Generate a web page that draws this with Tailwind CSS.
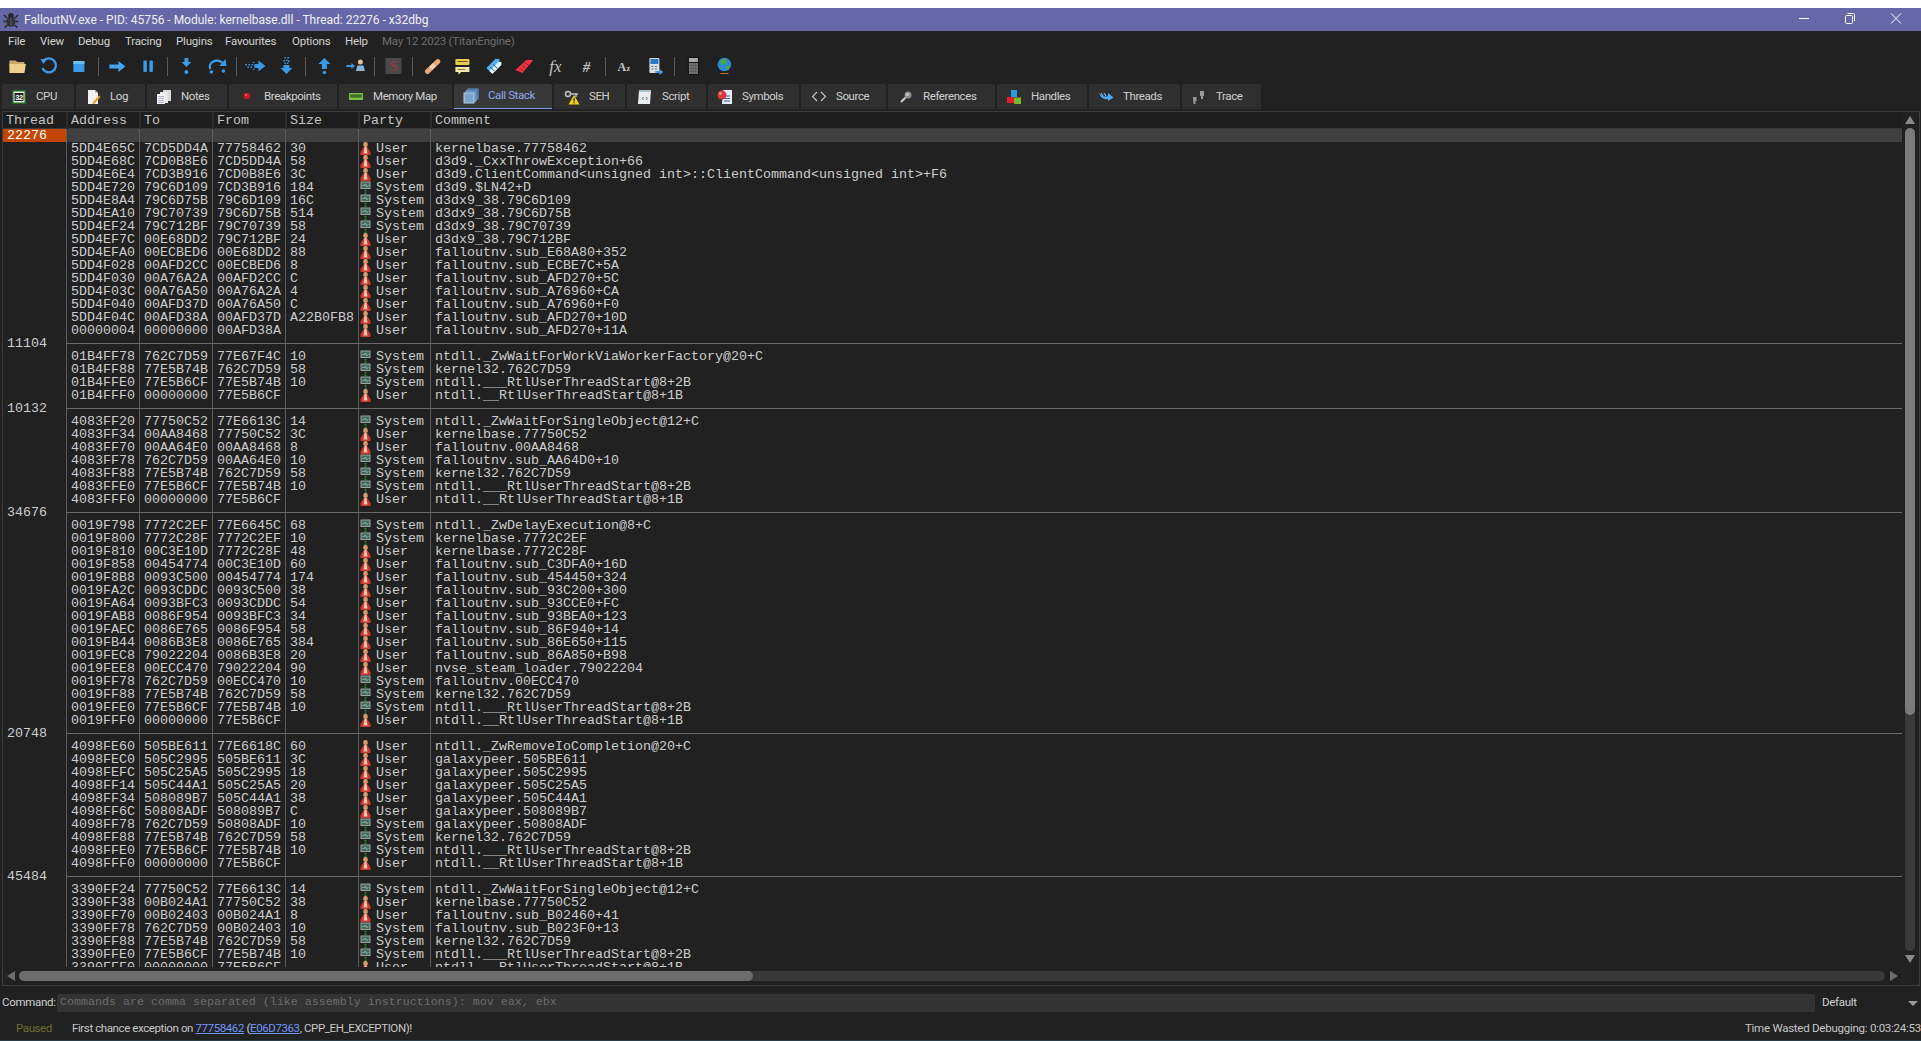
<!DOCTYPE html>
<html lang="en">
<head>
<meta charset="utf-8">
<title>x32dbg</title>
<script src="https://cdn.jsdelivr.net/npm/@tailwindcss/browser@4"></script>
</head>
<body class="bg-white">
<svg class="hidden" width="0" height="0">
  <symbol id="u" viewBox="0 0 12 13">
    <rect x="3.300" y="0" width="4.400" height="5" rx="1.800" fill="#d89a68"/>
    <path d="M3.800 5 H7.200 L10.500 10 V13 H0.500 V10 Z" fill="#c8382e"/>
    <path d="M4.500 5 H6.500 L7.500 11.500 H3.500 Z" fill="#f2c4ac"/>
  </symbol>
  <symbol id="s" viewBox="0 0 12 13">
    <rect x="0.500" y="0.500" width="10" height="7.500" fill="#9aa4a4"/>
    <rect x="1.500" y="1.500" width="8" height="5.500" fill="#46685c"/>
    <path d="M2.500 4.500 L4.500 4.500 L5.500 3 L6.500 5.500 L8.500 4.500" stroke="#a8d0c0" stroke-width="0.700" fill="none"/>
    <rect x="4.500" y="9" width="2" height="1.500" fill="#1f8a3a"/>
    <rect x="4.500" y="11.500" width="2" height="1.500" fill="#1f8a3a"/>
  </symbol>
</svg>

<div class="w-[1921px] h-[1041px] overflow-hidden flex flex-col font-['Roboto','Liberation_Sans',sans-serif]">
  <div class="h-2 shrink-0 bg-white"></div>

  <!-- title bar -->
  <div class="h-[23px] shrink-0 bg-[#6567a8] flex items-center pl-[3px] text-[#f0f0f0] text-[12px]">
    <svg class="w-[16px] h-[16px] mr-[5px]" viewBox="0 0 16 16"><ellipse cx="8" cy="9.500" rx="4.500" ry="5.500" fill="#333"/><circle cx="8" cy="3.800" r="2.800" fill="#262626"/><path d="M4 6 L1 3 M12 6 L15 3 M3.500 9.500 L0.500 9.500 M12.500 9.500 L15.500 9.500 M4.500 13 L1.500 15.500 M11.500 13 L14.500 15.500" stroke="#262626" stroke-width="1.400"/><path d="M8 5 V15" stroke="#6567a8" stroke-width="0.700"/></svg>
    <span>FalloutNV.exe - PID: 45756 - Module: kernelbase.dll - Thread: 22276 - x32dbg</span>
    <div class="ml-auto flex items-center h-full">
      <svg class="w-[46px] h-[23px]" viewBox="0 0 46 23"><path d="M18 10.500 H28" stroke="#fff" stroke-width="1"/></svg>
      <svg class="w-[46px] h-[23px]" viewBox="0 0 46 23"><rect x="18.500" y="7.500" width="7" height="8" rx="1" fill="none" stroke="#fff"/><path d="M20.500 5.500 H26.500 a1 1 0 0 1 1 1 V13" fill="none" stroke="#fff"/></svg>
      <svg class="w-[46px] h-[23px] mr-[2px]" viewBox="0 0 46 23"><path d="M18 5.500 L28 15.500 M28 5.500 L18 15.500" stroke="#fff" stroke-width="1"/></svg>
    </div>
  </div>

  <div class="flex-1 bg-[#212121] flex flex-col border-b border-[#2c3c46]">
    <!-- menu -->
    <div class="h-[22px] shrink-0 flex items-center text-[11.500px] tracking-[-0.200px] text-[#d2d2d2]">
      <span class="w-[40px] pl-[8px]">File</span>
      <span class="w-[38px]">View</span>
      <span class="w-[47px]">Debug</span>
      <span class="w-[51px]">Tracing</span>
      <span class="w-[49px]">Plugins</span>
      <span class="w-[67px]">Favourites</span>
      <span class="w-[53px]">Options</span>
      <span class="w-[37px]">Help</span>
      <span class="text-[#6e6e6e]">May 12 2023 (TitanEngine)</span>
    </div>

    <!-- toolbar -->
    <div class="h-[29px] shrink-0 flex items-center pl-[2px] pb-[3px] [&>svg]:w-[30.800px] [&>svg]:h-[20px] [&>svg]:shrink-0 [&>i]:w-[7.500px] [&>i]:h-[20px] [&>i]:shrink-0 [&>i]:bg-[linear-gradient(#5a5a5a,#5a5a5a)] [&>i]:bg-no-repeat [&>i]:bg-center [&>i]:bg-[length:1px_19px]">
      <svg viewBox="0 0 30 20"><path d="M7 6 L7 4.500 L13 4.500 L15 6 L22 6 L22 9 L7 9 Z" fill="#c8a868"/><path d="M7 8 L23.500 8 L22 17 L7 17 Z" fill="#ecd08c"/></svg>
      <svg viewBox="0 0 30 20"><path d="M10 5 A7 7 0 1 1 9 12" fill="none" stroke="#3a9ae8" stroke-width="2.400"/><path d="M7 3 L14 3 L10 8 Z" fill="#3a9ae8"/></svg>
      <svg viewBox="0 0 30 20"><rect x="9" y="5" width="11" height="11" fill="#3a9ae8"/><rect x="9" y="5" width="11" height="3" fill="#6cbcf4"/></svg>
      <i></i>
      <svg viewBox="0 0 30 20"><path d="M7 8.500 H16 V5 L23 10.500 L16 16 V12.500 H7 Z" fill="#44a4f0"/></svg>
      <svg viewBox="0 0 30 20"><rect x="10" y="4.500" width="3.500" height="11.500" rx="1" fill="#3a9ae8"/><rect x="16" y="4.500" width="3.500" height="11.500" rx="1" fill="#3a9ae8"/></svg>
      <i></i>
      <svg viewBox="0 0 30 20"><path d="M13 2 H17 V6 H20 L15 11 L10 6 H13 Z" fill="#3a9ae8"/><circle cx="15" cy="16" r="2" fill="#3a9ae8"/></svg>
      <svg viewBox="0 0 30 20"><path d="M8 13 A7 6 0 0 1 20 7" fill="none" stroke="#3a9ae8" stroke-width="2.400"/><path d="M17 10 L24 10 L23 3 Z" fill="#3a9ae8"/><circle cx="9" cy="16" r="1.800" fill="#3a9ae8"/><circle cx="21" cy="15" r="1.800" fill="#3a9ae8"/></svg>
      <i></i>
      <svg viewBox="0 0 30 20"><path d="M14 8 H18 V4.500 L25 10 L18 15.500 V12 H14 Z" fill="#3a9ae8"/><path d="M5 8 h1.500 v1.500 H5 Z M8 8 h1.500 v1.500 H8 Z M11 8 h1.500 v1.500 H11 Z M7 10.500 h1.500 V12 H7 Z M10 10.500 h1.500 V12 H10 Z M12.500 6 H14 V7 H12.500 Z M12.500 13 H14 V14 H12.500 Z" fill="#3a9ae8"/></svg>
      <svg viewBox="0 0 30 20"><path d="M12 9 H18 V12 H21 L15 18 L9 12 H12 Z" fill="#3a9ae8"/><path d="M13 1 h1.500 v1.500 H13 Z M16 1 h1.500 v1.500 H16 Z M14.500 3.500 h1.500 V5 h-1.500 Z M12 4 h1.500 v1.500 H12 Z M16.500 4.500 H18 V6 h-1.500 Z M13 6.500 h1.500 V8 H13 Z M15.500 6.500 H17 V8 h-1.500 Z" fill="#3a9ae8"/></svg>
      <i></i>
      <svg viewBox="0 0 30 20"><path d="M15 2 L21 8 H17.500 V13 H12.500 V8 H9 Z" fill="#3a9ae8"/><circle cx="15" cy="16.500" r="1.800" fill="#3a9ae8"/></svg>
      <svg viewBox="0 0 30 20"><path d="M6 9 H11 V7 L14.500 10 L11 13 V11 H6 Z" fill="#3a9ae8"/><circle cx="20" cy="6" r="2.500" fill="#e8c090"/><path d="M15.500 15 L17 9.500 H23 L24.500 15 Z" fill="#8ab4dc"/></svg>
      <i></i>
      <svg viewBox="0 0 30 20"><rect x="7" y="2" width="16" height="16" fill="#4a4a4a"/><text x="15" y="15" text-anchor="middle" font-family="'Liberation Serif',serif" font-weight="700" font-size="15" fill="#8e3a46">S</text></svg>
      <i></i>
      <svg viewBox="0 0 30 20"><path d="M8 14 L19 3.500 A2.500 2.500 0 0 1 22.500 7 L11.500 17.500 A2.500 2.500 0 0 1 8 14 Z" fill="#e8a878"/><rect x="-2.500" y="-2" width="5" height="4" transform="translate(15.200 10.500) rotate(-44)" fill="#f6d4b4"/></svg>
      <svg viewBox="0 0 30 20"><rect x="8" y="3" width="14" height="6" rx="1" fill="#e8cc50"/><rect x="10" y="5" width="10" height="1" fill="#6a5a20"/><rect x="8" y="11" width="14" height="5" fill="#f4e8b0"/><path d="M11 16 L11 18.500 L14 16 Z" fill="#f4e8b0"/><rect x="10" y="13" width="8" height="1" fill="#8a7a3a"/></svg>
      <svg viewBox="0 0 30 20"><path d="M8 12 L17 3 H21 V7 L12 16 Z" fill="#58b0ee"/><path d="M11 15 L20 6 H23 V9 L14 18 Z" fill="#e6f2fc"/><path d="M12 11 L16 15 M15 8.500 L19 12.500" stroke="#1a5a90" stroke-width="1"/></svg>
      <svg viewBox="0 0 30 20"><path d="M6 14 L17 4 H24 L13 17 Z" fill="#ee3440"/><path d="M10 12 L14 15 M13 9.500 L17 12.500 M16 7 L20 10" stroke="#a51a24" stroke-width="1"/></svg>
      <svg viewBox="0 0 30 20"><text x="15" y="15.500" text-anchor="middle" font-family="'Liberation Serif',serif" font-style="italic" font-size="17" fill="#c0c0c0">fx</text></svg>
      <svg viewBox="0 0 30 20"><text x="15" y="15.500" text-anchor="middle" font-family="'Liberation Serif',serif" font-style="italic" font-weight="700" font-size="15" fill="#c0c0c0">#</text></svg>
      <i></i>
      <svg viewBox="0 0 30 20"><text x="8" y="15" font-family="'Liberation Serif',serif" font-weight="700" font-size="12" fill="#c8c8c8">A</text><text x="17" y="15" font-family="'Liberation Serif',serif" font-weight="700" font-size="8" fill="#c8c8c8">z</text></svg>
      <svg viewBox="0 0 30 20"><rect x="9" y="2" width="10" height="15" rx="1" fill="#d8dee4"/><rect x="10" y="3" width="8" height="5" fill="#2878c8"/><path d="M11 10 h2 v1 h-2 Z M14.500 10 h2 v1 h-2 Z M11 12.500 h2 v1 h-2 Z M14.500 12.500 h2 v1 h-2 Z" fill="#666"/><path d="M15 15 H19 V13 L23 16 L19 19 V17 H15 Z" fill="#3a9ae8"/></svg>
      <i></i>
      <svg viewBox="0 0 30 20"><rect x="9.500" y="1" width="11" height="18" fill="#111"/><rect x="10.500" y="2" width="9" height="4" fill="#a8a8a8"/><rect x="10.500" y="7" width="9" height="11" fill="#7a7a7a"/><path d="M12.800 7 V18 M15 7 V18 M17.200 7 V18 M10.500 9.500 H19.500 M10.500 12.500 H19.500 M10.500 15.500 H19.500" stroke="#555" stroke-width="0.700"/></svg>
      <svg viewBox="0 0 30 20"><circle cx="15" cy="8.500" r="6.800" fill="#2a88d0"/><path d="M11 4 Q15 2 17 4 L16 8 L12 9 Z M16 11 L20 9 L20 12 L17 14 Z" fill="#4ea83a"/><path d="M11 17 H19 V18 H11 Z" fill="#d86a20"/><path d="M9 16 H21" stroke="#222" stroke-width="1"/></svg>
    </div>

    <!-- tabs -->
    <div class="mt-[2px] h-[25px] shrink-0 flex gap-[2px] pl-[2px] text-[11.500px] tracking-[-0.400px] text-[#cfcfcf] [&>div]:bg-[#2f2f2f] [&>div]:rounded-t-[2px] [&>div]:flex [&>div]:items-center [&>div]:pl-[9px] [&>div]:gap-[9px] [&_svg]:w-[16px] [&_svg]:h-[16px] [&_svg]:shrink-0">
      <div class="w-[72px]"><svg viewBox="0 0 16 16"><rect x="1" y="1" width="14" height="14" fill="#1c6a1c"/><rect x="2.500" y="2.500" width="11" height="11" fill="#eaeaea"/><rect x="3.500" y="4" width="9" height="8" fill="#222"/><text x="8" y="11" text-anchor="middle" font-family="'Liberation Sans',sans-serif" font-weight="700" font-size="7.500" fill="#fff">32</text></svg><span>CPU</span></div>
      <div class="w-[69px]"><svg viewBox="0 0 16 16"><path d="M3 1 H10 L13 4 V15 H3 Z" fill="#f2f2f2"/><path d="M10 1 L13 4 H10 Z" fill="#b8b8b8"/><path d="M8 13 L14 6.500 L15.500 8 L9.500 14.500 L7.500 15 Z" fill="#e0a020"/></svg><span>Log</span></div>
      <div class="w-[80px]"><svg viewBox="0 0 16 16"><rect x="7" y="1" width="8" height="11" fill="#d8d8d8"/><rect x="4" y="3" width="8" height="11" fill="#e8e8e8"/><rect x="1" y="5" width="8" height="10" fill="#f8f8f8"/><path d="M2 7.500 H8 M2 9.500 H8 M2 11.500 H8 M2 13.500 H8" stroke="#a0a0c0" stroke-width="0.800"/></svg><span>Notes</span></div>
      <div class="w-[108px] !gap-[10px]"><svg viewBox="0 0 16 16"><circle cx="9" cy="7" r="3.300" fill="#d01820"/><circle cx="8" cy="6" r="1" fill="#f07070"/></svg><span>Breakpoints</span></div>
      <div class="w-[113px]"><svg viewBox="0 0 16 16"><rect x="1" y="4" width="14" height="7" fill="#78c040"/><rect x="2.500" y="5.500" width="11" height="3" fill="#1f3a14"/><path d="M4 5.500 V8.500 M6 5.500 V8.500 M8 5.500 V8.500 M10 5.500 V8.500 M12 5.500 V8.500" stroke="#78c040" stroke-width="0.800"/></svg><span>Memory Map</span></div>
      <div class="w-[98px] !bg-[#383838] border-b border-[#8098ea] text-[#8ea8ee]"><svg viewBox="0 0 16 16"><rect x="5" y="1" width="10" height="10" fill="#2f5f94" stroke="#6c9ed0"/><rect x="3" y="3" width="10" height="10" fill="#4a7cae" stroke="#88b4dc"/><rect x="1" y="5" width="10" height="10" fill="#7ca4c8" stroke="#b4d0ea"/></svg><span>Call Stack</span></div>
      <div class="w-[71px] !pl-[10px]"><svg viewBox="0 0 16 16"><circle cx="4" cy="5" r="2.500" fill="none" stroke="#c0c0c0" stroke-width="1.500"/><path d="M6 5 H14 M12 5 V8" stroke="#c0c0c0" stroke-width="1.500"/><path d="M10 6 L15.500 15.500 H4.500 Z" fill="#f0d020"/><rect x="9.500" y="9" width="1.200" height="3.500" fill="#222"/><rect x="9.500" y="13.200" width="1.200" height="1.200" fill="#222"/></svg><span>SEH</span></div>
      <div class="w-[79px] !pl-[10px]"><svg viewBox="0 0 16 16"><path d="M2 1 H14 L13 15 H1 Z" fill="#e8eef0"/><path d="M2 1 H14 L14 3 H2 Z" fill="#a8c0c8"/><text x="7.500" y="12" text-anchor="middle" font-family="'Liberation Mono',monospace" font-size="7" fill="#444">‹›</text></svg><span>Script</span></div>
      <div class="w-[91px]"><svg viewBox="0 0 16 16"><path d="M6 1 H15 V15 H5 Z" fill="#e4ecf8"/><path d="M7 7 H13 M7 9.500 H13 M7 12 H13" stroke="#3a5aa8" stroke-width="1"/><circle cx="5" cy="6" r="4.500" fill="#d83a3a"/><circle cx="3.500" cy="4.500" r="1.300" fill="#f4a0a0"/></svg><span>Symbols</span></div>
      <div class="w-[85px] !pl-[10px]"><svg viewBox="0 0 16 16"><path d="M6 3 L1.500 7.500 L6 12 M10 3 L14.500 7.500 L10 12" fill="none" stroke="#c8c8c8" stroke-width="1.100"/></svg><span>Source</span></div>
      <div class="w-[107px] !pl-[10px]"><svg viewBox="0 0 16 16"><circle cx="10" cy="6" r="3.500" fill="#909090"/><circle cx="9.500" cy="5.500" r="1.500" fill="#c8c8c8"/><path d="M7.500 8.500 L3 13" stroke="#cfcfcf" stroke-width="2"/></svg><span>References</span></div>
      <div class="w-[90px]"><svg viewBox="0 0 16 16"><rect x="5" y="1" width="6" height="7" fill="#2a9ae0"/><rect x="1" y="8" width="7" height="6" fill="#e0202c"/><rect x="8" y="8.500" width="7" height="6.500" fill="#7ab82a"/></svg><span>Handles</span></div>
      <div class="w-[91px]"><svg viewBox="0 0 16 16"><path d="M1 4 Q5 9 10 7 V4 L15.500 8.500 L10 12 V10 Q3 11 1 4 Z" fill="#4eaaf0"/><path d="M6 4 L8 7 M3 4 L5 7" stroke="#9ad2fa" stroke-width="1"/></svg><span>Threads</span></div>
      <div class="w-[79px]"><svg viewBox="0 0 16 16"><path d="M2 8 h3.500 v4 h-1 v3 h-2 Z" fill="#9a9a9a"/><path d="M9 2 h4 v5 h-1 v3 h-2 v-3 h-1 Z" fill="#9a9a9a"/></svg><span>Trace</span></div>
    </div>

    <!-- panel -->
    <div class="mt-[2px] ml-[2px] mr-[1px] h-[875px] shrink-0 border border-[#3c3c3c] flex">
      <div class="w-[1899px] shrink-0 flex flex-col">
        <!-- header -->
        <div class="h-[17px] shrink-0 grid grid-cols-[63px_73px_73px_73px_73px_72px_1fr] bg-[#1e1e1e] border-b border-[#3a3a3a] font-['Liberation_Mono',monospace] text-[13.330px] leading-[17px] text-[#c4c4c4] [&>span]:border-l-2 [&>span]:border-[#2c2c2c] [&>span]:pl-[3px] [&>span:first-child]:border-l-0">
          <span>Thread</span><span>Address</span><span>To</span><span>From</span><span>Size</span><span>Party</span><span>Comment</span>
        </div>
        <!-- rows -->
        <div class="h-[838px] shrink-0 overflow-hidden font-['Liberation_Mono',monospace] text-[13.330px] text-[#cdcdcd] [&>div]:grid [&>div]:grid-cols-[63px_73px_73px_73px_73px_72px_1fr] [&>div]:h-[13px] [&>div]:leading-[13px] [&>div>span]:border-l [&>div>span]:border-[#5e5e5e] [&>div>span]:pl-[4px] [&>div>span]:h-[13px] [&>div>span]:whitespace-pre [&>div>span:first-child]:border-l-0 [&>div>span:nth-child(6)]:flex [&>div>span:nth-child(6)]:items-center [&>div>span:nth-child(6)]:pl-[1px] [&_svg]:w-[12px] [&_svg]:h-[13px] [&_svg]:mr-[4px] [&_svg]:shrink-0">
          <div class="bg-[#404040]"><span class="bg-[#c24500] text-white">22276</span><span></span><span></span><span></span><span></span><span></span><span></span></div>
          <div><span></span><span>5DD4E65C</span><span>7CD5DD4A</span><span>77758462</span><span>30</span><span><svg><use href="#u"/></svg>User</span><span>kernelbase.77758462</span></div>
          <div><span></span><span>5DD4E68C</span><span>7CD0B8E6</span><span>7CD5DD4A</span><span>58</span><span><svg><use href="#u"/></svg>User</span><span>d3d9._CxxThrowException+66</span></div>
          <div><span></span><span>5DD4E6E4</span><span>7CD3B916</span><span>7CD0B8E6</span><span>3C</span><span><svg><use href="#u"/></svg>User</span><span>d3d9.ClientCommand&lt;unsigned int&gt;::ClientCommand&lt;unsigned int&gt;+F6</span></div>
          <div><span></span><span>5DD4E720</span><span>79C6D109</span><span>7CD3B916</span><span>184</span><span><svg><use href="#s"/></svg>System</span><span>d3d9.$LN42+D</span></div>
          <div><span></span><span>5DD4E8A4</span><span>79C6D75B</span><span>79C6D109</span><span>16C</span><span><svg><use href="#s"/></svg>System</span><span>d3dx9_38.79C6D109</span></div>
          <div><span></span><span>5DD4EA10</span><span>79C70739</span><span>79C6D75B</span><span>514</span><span><svg><use href="#s"/></svg>System</span><span>d3dx9_38.79C6D75B</span></div>
          <div><span></span><span>5DD4EF24</span><span>79C712BF</span><span>79C70739</span><span>58</span><span><svg><use href="#s"/></svg>System</span><span>d3dx9_38.79C70739</span></div>
          <div><span></span><span>5DD4EF7C</span><span>00E68DD2</span><span>79C712BF</span><span>24</span><span><svg><use href="#u"/></svg>User</span><span>d3dx9_38.79C712BF</span></div>
          <div><span></span><span>5DD4EFA0</span><span>00ECBED6</span><span>00E68DD2</span><span>88</span><span><svg><use href="#u"/></svg>User</span><span>falloutnv.sub_E68A80+352</span></div>
          <div><span></span><span>5DD4F028</span><span>00AFD2CC</span><span>00ECBED6</span><span>8</span><span><svg><use href="#u"/></svg>User</span><span>falloutnv.sub_ECBE7C+5A</span></div>
          <div><span></span><span>5DD4F030</span><span>00A76A2A</span><span>00AFD2CC</span><span>C</span><span><svg><use href="#u"/></svg>User</span><span>falloutnv.sub_AFD270+5C</span></div>
          <div><span></span><span>5DD4F03C</span><span>00A76A50</span><span>00A76A2A</span><span>4</span><span><svg><use href="#u"/></svg>User</span><span>falloutnv.sub_A76960+CA</span></div>
          <div><span></span><span>5DD4F040</span><span>00AFD37D</span><span>00A76A50</span><span>C</span><span><svg><use href="#u"/></svg>User</span><span>falloutnv.sub_A76960+F0</span></div>
          <div><span></span><span>5DD4F04C</span><span>00AFD38A</span><span>00AFD37D</span><span>A22B0FB8</span><span><svg><use href="#u"/></svg>User</span><span>falloutnv.sub_AFD270+10D</span></div>
          <div><span></span><span>00000004</span><span>00000000</span><span>00AFD38A</span><span></span><span><svg><use href="#u"/></svg>User</span><span>falloutnv.sub_AFD270+11A</span></div>
          <div class="[&>span+span]:bg-[linear-gradient(#0000_6px,#6a6a6a_6px,#6a6a6a_7px,#0000_7px)]"><span>11104</span><span></span><span></span><span></span><span></span><span></span><span></span></div>
          <div><span></span><span>01B4FF78</span><span>762C7D59</span><span>77E67F4C</span><span>10</span><span><svg><use href="#s"/></svg>System</span><span>ntdll._ZwWaitForWorkViaWorkerFactory@20+C</span></div>
          <div><span></span><span>01B4FF88</span><span>77E5B74B</span><span>762C7D59</span><span>58</span><span><svg><use href="#s"/></svg>System</span><span>kernel32.762C7D59</span></div>
          <div><span></span><span>01B4FFE0</span><span>77E5B6CF</span><span>77E5B74B</span><span>10</span><span><svg><use href="#s"/></svg>System</span><span>ntdll.___RtlUserThreadStart@8+2B</span></div>
          <div><span></span><span>01B4FFF0</span><span>00000000</span><span>77E5B6CF</span><span></span><span><svg><use href="#u"/></svg>User</span><span>ntdll.__RtlUserThreadStart@8+1B</span></div>
          <div class="[&>span+span]:bg-[linear-gradient(#0000_6px,#6a6a6a_6px,#6a6a6a_7px,#0000_7px)]"><span>10132</span><span></span><span></span><span></span><span></span><span></span><span></span></div>
          <div><span></span><span>4083FF20</span><span>77750C52</span><span>77E6613C</span><span>14</span><span><svg><use href="#s"/></svg>System</span><span>ntdll._ZwWaitForSingleObject@12+C</span></div>
          <div><span></span><span>4083FF34</span><span>00AA8468</span><span>77750C52</span><span>3C</span><span><svg><use href="#u"/></svg>User</span><span>kernelbase.77750C52</span></div>
          <div><span></span><span>4083FF70</span><span>00AA64E0</span><span>00AA8468</span><span>8</span><span><svg><use href="#u"/></svg>User</span><span>falloutnv.00AA8468</span></div>
          <div><span></span><span>4083FF78</span><span>762C7D59</span><span>00AA64E0</span><span>10</span><span><svg><use href="#s"/></svg>System</span><span>falloutnv.sub_AA64D0+10</span></div>
          <div><span></span><span>4083FF88</span><span>77E5B74B</span><span>762C7D59</span><span>58</span><span><svg><use href="#s"/></svg>System</span><span>kernel32.762C7D59</span></div>
          <div><span></span><span>4083FFE0</span><span>77E5B6CF</span><span>77E5B74B</span><span>10</span><span><svg><use href="#s"/></svg>System</span><span>ntdll.___RtlUserThreadStart@8+2B</span></div>
          <div><span></span><span>4083FFF0</span><span>00000000</span><span>77E5B6CF</span><span></span><span><svg><use href="#u"/></svg>User</span><span>ntdll.__RtlUserThreadStart@8+1B</span></div>
          <div class="[&>span+span]:bg-[linear-gradient(#0000_6px,#6a6a6a_6px,#6a6a6a_7px,#0000_7px)]"><span>34676</span><span></span><span></span><span></span><span></span><span></span><span></span></div>
          <div><span></span><span>0019F798</span><span>7772C2EF</span><span>77E6645C</span><span>68</span><span><svg><use href="#s"/></svg>System</span><span>ntdll._ZwDelayExecution@8+C</span></div>
          <div><span></span><span>0019F800</span><span>7772C28F</span><span>7772C2EF</span><span>10</span><span><svg><use href="#s"/></svg>System</span><span>kernelbase.7772C2EF</span></div>
          <div><span></span><span>0019F810</span><span>00C3E10D</span><span>7772C28F</span><span>48</span><span><svg><use href="#u"/></svg>User</span><span>kernelbase.7772C28F</span></div>
          <div><span></span><span>0019F858</span><span>00454774</span><span>00C3E10D</span><span>60</span><span><svg><use href="#u"/></svg>User</span><span>falloutnv.sub_C3DFA0+16D</span></div>
          <div><span></span><span>0019F8B8</span><span>0093C500</span><span>00454774</span><span>174</span><span><svg><use href="#u"/></svg>User</span><span>falloutnv.sub_454450+324</span></div>
          <div><span></span><span>0019FA2C</span><span>0093CDDC</span><span>0093C500</span><span>38</span><span><svg><use href="#u"/></svg>User</span><span>falloutnv.sub_93C200+300</span></div>
          <div><span></span><span>0019FA64</span><span>0093BFC3</span><span>0093CDDC</span><span>54</span><span><svg><use href="#u"/></svg>User</span><span>falloutnv.sub_93CCE0+FC</span></div>
          <div><span></span><span>0019FAB8</span><span>0086F954</span><span>0093BFC3</span><span>34</span><span><svg><use href="#u"/></svg>User</span><span>falloutnv.sub_93BEA0+123</span></div>
          <div><span></span><span>0019FAEC</span><span>0086E765</span><span>0086F954</span><span>58</span><span><svg><use href="#u"/></svg>User</span><span>falloutnv.sub_86F940+14</span></div>
          <div><span></span><span>0019FB44</span><span>0086B3E8</span><span>0086E765</span><span>384</span><span><svg><use href="#u"/></svg>User</span><span>falloutnv.sub_86E650+115</span></div>
          <div><span></span><span>0019FEC8</span><span>79022204</span><span>0086B3E8</span><span>20</span><span><svg><use href="#u"/></svg>User</span><span>falloutnv.sub_86A850+B98</span></div>
          <div><span></span><span>0019FEE8</span><span>00ECC470</span><span>79022204</span><span>90</span><span><svg><use href="#u"/></svg>User</span><span>nvse_steam_loader.79022204</span></div>
          <div><span></span><span>0019FF78</span><span>762C7D59</span><span>00ECC470</span><span>10</span><span><svg><use href="#s"/></svg>System</span><span>falloutnv.00ECC470</span></div>
          <div><span></span><span>0019FF88</span><span>77E5B74B</span><span>762C7D59</span><span>58</span><span><svg><use href="#s"/></svg>System</span><span>kernel32.762C7D59</span></div>
          <div><span></span><span>0019FFE0</span><span>77E5B6CF</span><span>77E5B74B</span><span>10</span><span><svg><use href="#s"/></svg>System</span><span>ntdll.___RtlUserThreadStart@8+2B</span></div>
          <div><span></span><span>0019FFF0</span><span>00000000</span><span>77E5B6CF</span><span></span><span><svg><use href="#u"/></svg>User</span><span>ntdll.__RtlUserThreadStart@8+1B</span></div>
          <div class="[&>span+span]:bg-[linear-gradient(#0000_6px,#6a6a6a_6px,#6a6a6a_7px,#0000_7px)]"><span>20748</span><span></span><span></span><span></span><span></span><span></span><span></span></div>
          <div><span></span><span>4098FE60</span><span>505BE611</span><span>77E6618C</span><span>60</span><span><svg><use href="#u"/></svg>User</span><span>ntdll._ZwRemoveIoCompletion@20+C</span></div>
          <div><span></span><span>4098FEC0</span><span>505C2995</span><span>505BE611</span><span>3C</span><span><svg><use href="#u"/></svg>User</span><span>galaxypeer.505BE611</span></div>
          <div><span></span><span>4098FEFC</span><span>505C25A5</span><span>505C2995</span><span>18</span><span><svg><use href="#u"/></svg>User</span><span>galaxypeer.505C2995</span></div>
          <div><span></span><span>4098FF14</span><span>505C44A1</span><span>505C25A5</span><span>20</span><span><svg><use href="#u"/></svg>User</span><span>galaxypeer.505C25A5</span></div>
          <div><span></span><span>4098FF34</span><span>508089B7</span><span>505C44A1</span><span>38</span><span><svg><use href="#u"/></svg>User</span><span>galaxypeer.505C44A1</span></div>
          <div><span></span><span>4098FF6C</span><span>50808ADF</span><span>508089B7</span><span>C</span><span><svg><use href="#u"/></svg>User</span><span>galaxypeer.508089B7</span></div>
          <div><span></span><span>4098FF78</span><span>762C7D59</span><span>50808ADF</span><span>10</span><span><svg><use href="#s"/></svg>System</span><span>galaxypeer.50808ADF</span></div>
          <div><span></span><span>4098FF88</span><span>77E5B74B</span><span>762C7D59</span><span>58</span><span><svg><use href="#s"/></svg>System</span><span>kernel32.762C7D59</span></div>
          <div><span></span><span>4098FFE0</span><span>77E5B6CF</span><span>77E5B74B</span><span>10</span><span><svg><use href="#s"/></svg>System</span><span>ntdll.___RtlUserThreadStart@8+2B</span></div>
          <div><span></span><span>4098FFF0</span><span>00000000</span><span>77E5B6CF</span><span></span><span><svg><use href="#u"/></svg>User</span><span>ntdll.__RtlUserThreadStart@8+1B</span></div>
          <div class="[&>span+span]:bg-[linear-gradient(#0000_6px,#6a6a6a_6px,#6a6a6a_7px,#0000_7px)]"><span>45484</span><span></span><span></span><span></span><span></span><span></span><span></span></div>
          <div><span></span><span>3390FF24</span><span>77750C52</span><span>77E6613C</span><span>14</span><span><svg><use href="#s"/></svg>System</span><span>ntdll._ZwWaitForSingleObject@12+C</span></div>
          <div><span></span><span>3390FF38</span><span>00B024A1</span><span>77750C52</span><span>38</span><span><svg><use href="#u"/></svg>User</span><span>kernelbase.77750C52</span></div>
          <div><span></span><span>3390FF70</span><span>00B02403</span><span>00B024A1</span><span>8</span><span><svg><use href="#u"/></svg>User</span><span>falloutnv.sub_B02460+41</span></div>
          <div><span></span><span>3390FF78</span><span>762C7D59</span><span>00B02403</span><span>10</span><span><svg><use href="#s"/></svg>System</span><span>falloutnv.sub_B023F0+13</span></div>
          <div><span></span><span>3390FF88</span><span>77E5B74B</span><span>762C7D59</span><span>58</span><span><svg><use href="#s"/></svg>System</span><span>kernel32.762C7D59</span></div>
          <div><span></span><span>3390FFE0</span><span>77E5B6CF</span><span>77E5B74B</span><span>10</span><span><svg><use href="#s"/></svg>System</span><span>ntdll.___RtlUserThreadStart@8+2B</span></div>
          <div><span></span><span>3390FFF0</span><span>00000000</span><span>77E5B6CF</span><span></span><span><svg><use href="#u"/></svg>User</span><span>ntdll.__RtlUserThreadStart@8+1B</span></div>
        </div>
        <!-- horizontal scrollbar -->
        <div class="mt-[4px] h-[10px] flex items-center pl-[4px] shrink-0">
          <div class="w-0 h-0 border-y-[5px] border-y-transparent border-r-[8px] border-r-[#6e6e6e]"></div>
          <div class="ml-[4px] w-[1866px] h-[10px] rounded-[5px] bg-[#3a3a3a]">
            <div class="w-[734px] h-[10px] rounded-[5px] bg-[#6c6c6c]"></div>
          </div>
          <div class="ml-[5px] w-0 h-0 border-y-[5px] border-y-transparent border-l-[8px] border-l-[#6e6e6e]"></div>
        </div>
      </div>
      <!-- vertical scrollbar -->
      <div class="flex-1 flex flex-col items-center pt-[4px] pr-[1px]">
        <div class="w-0 h-0 border-x-[5px] border-x-transparent border-b-[8px] border-b-[#8a8a8a]"></div>
        <div class="mt-[4px] w-[10px] h-[823px] rounded-[5px] bg-[#3a3a3a]">
          <div class="w-[10px] h-[587px] rounded-[5px] bg-[#7a7a7a]"></div>
        </div>
        <div class="mt-[4px] w-0 h-0 border-x-[5px] border-x-transparent border-t-[8px] border-t-[#8a8a8a]"></div>
      </div>
    </div>

    <!-- command -->
    <div class="mt-[8px] h-[18px] shrink-0 flex items-center text-[11.500px] tracking-[-0.300px] text-[#d0d0d0]">
      <span class="w-[55px] pl-[2px] shrink-0">Command:</span>
      <div class="w-[1758px] shrink-0 ml-[2px] h-[18px] bg-[#333333] rounded-[2px] pl-[3px] flex items-center font-['Liberation_Mono',monospace] text-[11.670px] tracking-normal text-[#6c6c6c] whitespace-pre">Commands are comma separated (like assembly instructions): mov eax, ebx</div>
      <span class="ml-[7px]">Default</span>
      <div class="ml-auto mr-[3px] w-0 h-0 border-x-[5px] border-x-transparent border-t-[5px] border-t-[#9a9a9a]"></div>
    </div>

    <!-- status -->
    <div class="flex-1 flex items-center pt-[5px] text-[11.500px] tracking-[-0.400px] text-[#c8c8c8]">
      <span class="w-[56px] ml-[16px] shrink-0 text-[#6e6e2c]">Paused</span>
      <span>First chance exception on <span class="text-[#7296ff] underline">77758462</span> (<span class="text-[#7296ff] underline">E06D7363</span>, CPP_EH_EXCEPTION)!</span>
      <span class="ml-auto tracking-[-0.250px]">Time Wasted Debugging: 0:03:24:53</span>
    </div>
  </div>
</div>
</body>
</html>
